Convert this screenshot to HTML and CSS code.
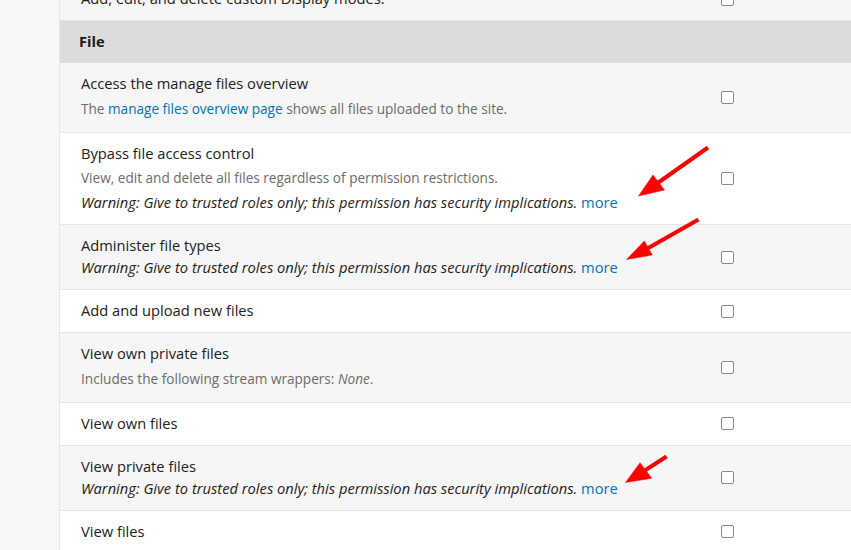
FILE: index.html
```html
<!DOCTYPE html>
<html lang="en">
<head>
<meta charset="utf-8">
<title>Permissions</title>
<link rel="stylesheet" href="styles.css">
</head>
<body>
<div class="page">
  <table class="perms">
    <colgroup><col class="col-name"><col class="col-check"></colgroup>
    <tbody>
      <tr class="odd">
        <td class="name"><div class="title">Add, edit, and delete custom Display modes.</div></td>
        <td class="check"><input type="checkbox" class="cb"></td>
      </tr>
      <tr class="module">
        <td class="module-name" colspan="2">File</td>
      </tr>
      <tr class="odd">
        <td class="name">
          <div class="title">Access the manage files overview</div>
          <div class="desc">The <a href="#">manage files overview page</a> shows all files uploaded to the site.</div>
        </td>
        <td class="check"><input type="checkbox" class="cb"></td>
      </tr>
      <tr class="even">
        <td class="name">
          <div class="title">Bypass file access control</div>
          <div class="desc">View, edit and delete all files regardless of permission restrictions.</div>
          <div class="warn"><em>Warning: Give to trusted roles only; this permission has security implications.</em> <a href="#">more</a></div>
        </td>
        <td class="check"><input type="checkbox" class="cb"></td>
      </tr>
      <tr class="odd">
        <td class="name">
          <div class="title">Administer file types</div>
          <div class="warn"><em>Warning: Give to trusted roles only; this permission has security implications.</em> <a href="#">more</a></div>
        </td>
        <td class="check"><input type="checkbox" class="cb"></td>
      </tr>
      <tr class="even">
        <td class="name"><div class="title">Add and upload new files</div></td>
        <td class="check"><input type="checkbox" class="cb"></td>
      </tr>
      <tr class="odd">
        <td class="name">
          <div class="title">View own private files</div>
          <div class="desc">Includes the following stream wrappers: <em>None</em>.</div>
        </td>
        <td class="check"><input type="checkbox" class="cb"></td>
      </tr>
      <tr class="even">
        <td class="name"><div class="title">View own files</div></td>
        <td class="check"><input type="checkbox" class="cb"></td>
      </tr>
      <tr class="odd">
        <td class="name">
          <div class="title">View private files</div>
          <div class="warn"><em>Warning: Give to trusted roles only; this permission has security implications.</em> <a href="#">more</a></div>
        </td>
        <td class="check"><input type="checkbox" class="cb"></td>
      </tr>
      <tr class="even">
        <td class="name"><div class="title">View files</div></td>
        <td class="check"><input type="checkbox" class="cb"></td>
      </tr>
    </tbody>
  </table>

  <svg class="arrows" width="851" height="550" viewBox="0 0 851 550" aria-hidden="true">
    <g fill="#ff0000" stroke="#ff0000">
      <line x1="708" y1="147.5" x2="657" y2="183.5" stroke-width="4" stroke-linecap="butt"/>
      <polygon points="638.5,196 653,175 664.5,190" stroke-width="0.5"/>
      <line x1="698.5" y1="219.5" x2="646.5" y2="249" stroke-width="4"/>
      <polygon points="626.5,259.5 644.3,241 652.3,255" stroke-width="0.5"/>
      <line x1="666.5" y1="456.5" x2="644" y2="471" stroke-width="4"/>
      <polygon points="625.5,482.5 640,462.7 651.7,478.3" stroke-width="0.5"/>
    </g>
  </svg>
</div>
</body>
</html>
```

FILE: styles.css
```css
html, body {
  margin: 0;
  padding: 0;
}
body {
  background: #f8f8f8;
  font-family: "Open Sans", "Noto Sans", "DejaVu Sans", sans-serif;
  color: #222;
  overflow: hidden;
  width: 851px;
  height: 550px;
}
.page {
  position: relative;
  width: 851px;
  height: 550px;
  overflow: hidden;
}
.perms {
  margin: -22px 0 0 59px;
  border-collapse: collapse;
  table-layout: fixed;
  width: 820px;
  border-left: 1px solid #e6e6e6;
}
.col-name { width: 640px; }
.col-check { width: 180px; }
.perms td {
  border-bottom: 1px solid #e6e6e6;
  vertical-align: middle;
}
.perms tr.odd td { background: #f6f6f6; }
.perms tr.even td { background: #ffffff; }
.name {
  padding: 9px 21px 11px 21px;
}
.check {
  padding: 0 0 0 21px;
}
.title {
  font-size: 14.7px;
  line-height: 22px;
  color: #222;
}
.desc {
  font-size: 13.6px;
  line-height: 21px;
  color: #6c6c6c;
  margin-top: 3.5px;
  margin-bottom: 2px;
}
.desc em { font-style: italic; }
.warn {
  font-size: 14.7px;
  line-height: 21px;
  color: #222;
  margin-top: 1px;
}
.desc + .warn {
  margin-top: 4px;
}
.warn em { font-style: italic; }
a {
  color: #0074bd;
  text-decoration: none;
}
.module td.module-name {
  background: #dcdcdc;
  font-weight: 700;
  font-size: 14.7px;
  line-height: 22px;
  padding: 9px 19px 11px 19px;
  border-bottom: 0;
  color: #1a1a1a;
}
.cb {
  appearance: none;
  -webkit-appearance: none;
  display: block;
  margin: 0;
  width: 13px;
  height: 13px;
  box-sizing: border-box;
  border: 1px solid #8a8a8a;
  border-radius: 2px;
  background: #fff;
}
.arrows {
  position: absolute;
  left: 0;
  top: 0;
  pointer-events: none;
}
```
